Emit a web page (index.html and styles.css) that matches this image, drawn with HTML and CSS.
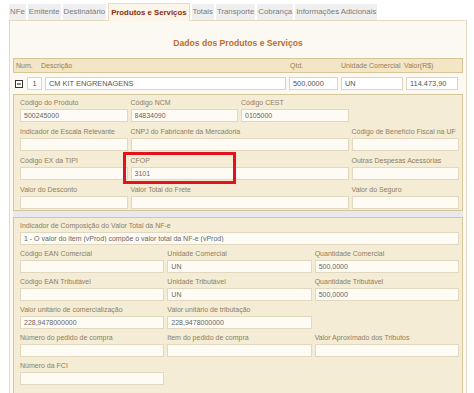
FILE: index.html
```html
<!DOCTYPE html>
<html lang="pt-BR">
<head>
    <meta charset="UTF-8">
    <title>NF-e - Produtos e Serviços</title>
    <link rel="stylesheet" href="styles.css">
</head>
<body>
    <div class="tabs">
        <span class="tab">NFe</span>
        <span class="tab">Emitente</span>
        <span class="tab">Destinatário</span>
        <span class="tab active">Produtos e Serviços</span>
        <span class="tab">Totais</span>
        <span class="tab">Transporte</span>
        <span class="tab">Cobrança</span>
        <span class="tab">Informações Adicionais</span>
    </div>

    <div class="panel">
        <h2 class="title">Dados dos Produtos e Serviços</h2>

        <div class="item-head">
            <span>Num.</span>
            <span>Descrição</span>
            <span>Qtd.</span>
            <span>Unidade Comercial</span>
            <span>Valor(R$)</span>
        </div>

        <div class="item-row">
            <svg class="toggle" width="8" height="8" viewBox="0 0 8 8">
                <rect x="0.5" y="0.5" width="7" height="7" fill="#fff" stroke="#333"/>
                <line x1="2" y1="4" x2="6" y2="4" stroke="#333" stroke-width="1.2"/>
            </svg>
            <input class="cell center" type="text" value="1" readonly>
            <input class="cell" type="text" value="CM KIT ENGRENAGENS" readonly>
            <input class="cell" type="text" value="500,0000" readonly>
            <input class="cell" type="text" value="UN" readonly>
            <input class="cell" type="text" value="114.473,90" readonly>
        </div>

        <div class="box grid-4">
            <div class="field">
                <label>Código do Produto</label>
                <input type="text" value="500245000" readonly>
            </div>
            <div class="field">
                <label>Código NCM</label>
                <input type="text" value="84834090" readonly>
            </div>
            <div class="field">
                <label>Código CEST</label>
                <input type="text" value="0105000" readonly>
            </div>
            <div class="field"></div>

            <div class="field">
                <label>Indicador de Escala Relevante</label>
                <input type="text" readonly>
            </div>
            <div class="field span-2">
                <label>CNPJ do Fabricante da Mercadoria</label>
                <input type="text" readonly>
            </div>
            <div class="field">
                <label>Código de Benefício Fiscal na UF</label>
                <input type="text" readonly>
            </div>

            <div class="field">
                <label>Código EX da TIPI</label>
                <input type="text" readonly>
            </div>
            <div class="field span-2">
                <label>CFOP</label>
                <input type="text" value="3101" readonly>
            </div>
            <div class="field">
                <label>Outras Despesas Acessórias</label>
                <input type="text" readonly>
            </div>

            <div class="field">
                <label>Valor do Desconto</label>
                <input type="text" readonly>
            </div>
            <div class="field span-2">
                <label>Valor Total do Frete</label>
                <input type="text" readonly>
            </div>
            <div class="field">
                <label>Valor do Seguro</label>
                <input type="text" readonly>
            </div>

            <div class="highlight"></div>
        </div>

        <div class="band"></div>

        <div class="box grid-3 last">
            <div class="field span-3">
                <label>Indicador de Composição do Valor Total da NF-e</label>
                <input type="text" value="1 - O valor do item (vProd) compõe o valor total da NF-e (vProd)" readonly>
            </div>

            <div class="field">
                <label>Código EAN Comercial</label>
                <input type="text" readonly>
            </div>
            <div class="field">
                <label>Unidade Comercial</label>
                <input type="text" value="UN" readonly>
            </div>
            <div class="field">
                <label>Quantidade Comercial</label>
                <input type="text" value="500,0000" readonly>
            </div>

            <div class="field">
                <label>Código EAN Tributável</label>
                <input type="text" readonly>
            </div>
            <div class="field">
                <label>Unidade Tributável</label>
                <input type="text" value="UN" readonly>
            </div>
            <div class="field">
                <label>Quantidade Tributável</label>
                <input type="text" value="500,0000" readonly>
            </div>

            <div class="field">
                <label>Valor unitário de comercialização</label>
                <input type="text" value="228,9478000000" readonly>
            </div>
            <div class="field">
                <label>Valor unitário de tributação</label>
                <input type="text" value="228,9478000000" readonly>
            </div>
            <div class="field"></div>

            <div class="field">
                <label>Número do pedido de compra</label>
                <input type="text" readonly>
            </div>
            <div class="field">
                <label>Item do pedido de compra</label>
                <input type="text" readonly>
            </div>
            <div class="field">
                <label>Valor Aproximado dos Tributos</label>
                <input type="text" readonly>
            </div>

            <div class="field">
                <label>Número da FCI</label>
                <input type="text" readonly>
            </div>
        </div>
    </div>
</body>
</html>
```

FILE: styles.css
```css
body {
    margin: 0;
    background-color: #ffffff;
    font-family: "Liberation Sans", Arial, sans-serif;
    color: #6a6a6a;
}

.tabs {
    display: flex;
    align-items: flex-end;
    padding: 4px 0 0 9px;
    height: 16px;
}

.tab {
    background-color: #efefef;
    color: #7c7c7c;
    font-size: 7.8px;
    line-height: 16px;
    padding: 0 1px;
    margin-right: 2px;
}

.tab.active {
    background-color: #fbf5ea;
    color: #8b2b10;
    font-weight: bold;
    line-height: 17px;
    padding: 0 2px;
    border: 1px solid #f0d8bd;
    border-bottom: none;
    margin-bottom: -1px;
    position: relative;
}

.panel {
    margin: 0 7px 0 9px;
    background-color: #fcf9f2;
    border: 1px solid #e4dac3;
    padding: 0 3px;
    height: 400px;
}

.title {
    margin: 0 0 9px 0;
    padding-top: 16px;
    text-align: center;
    font-size: 8.6px;
    line-height: 12px;
    color: #bd6c2d;
}

.item-head {
    display: grid;
    grid-template-columns: 25px 249px 51px 63px 1fr;
    background-color: #f2e6c7;
    border: 1px solid #d8c495;
    padding-left: 2px;
    height: 13px;
    font-size: 7px;
    line-height: 13px;
    color: #957f5b;
}

.item-row {
    display: grid;
    grid-template-columns: 9px 15px 241px 49px 62px 52px;
    column-gap: 3px;
    align-items: center;
    margin-top: 4px;
    padding-left: 2px;
}

.toggle {
    display: block;
}

.cell {
    box-sizing: border-box;
    width: 100%;
    height: 13px;
    border: 1px solid #dcd5c3;
    background-color: #ffffff;
    font-family: "Liberation Sans", Arial, sans-serif;
    font-size: 7.4px;
    color: #555555;
    padding: 0 3px;
    margin: 0;
    outline: none;
}

.cell.center {
    text-align: center;
}

.box {
    position: relative;
    display: grid;
    column-gap: 3px;
    row-gap: 4px;
    margin-top: 4px;
    background-color: #f4ecd5;
    border: 1px solid #d6c69c;
    padding: 2px 3px 1px 6px;
}

.grid-4 {
    grid-template-columns: repeat(4, 1fr);
}

.grid-3 {
    grid-template-columns: repeat(3, 1fr);
    row-gap: 3px;
    margin-top: 0;
    padding-bottom: 40px;
}

.field label {
    display: block;
    font-size: 7px;
    line-height: 12px;
    color: #8e7e62;
    white-space: nowrap;
}

.field input {
    display: block;
    box-sizing: border-box;
    width: 100%;
    height: 13px;
    margin: 0;
    padding: 0 3px;
    border: 1px solid #e1d8bf;
    background-color: #fdfbf4;
    font-family: "Liberation Sans", Arial, sans-serif;
    font-size: 7px;
    color: #666666;
    outline: none;
}

.span-2 {
    grid-column: span 2;
}

.span-3 {
    grid-column: span 3;
}

.band {
    height: 6px;
    background-color: #e9e9ed;
}

/* caixa vermelha por cima do CFOP */
.highlight {
    position: absolute;
    left: 109px;
    top: 57px;
    width: 113px;
    height: 32px;
    box-sizing: border-box;
    border: 3px solid #e3121c;
}
```
